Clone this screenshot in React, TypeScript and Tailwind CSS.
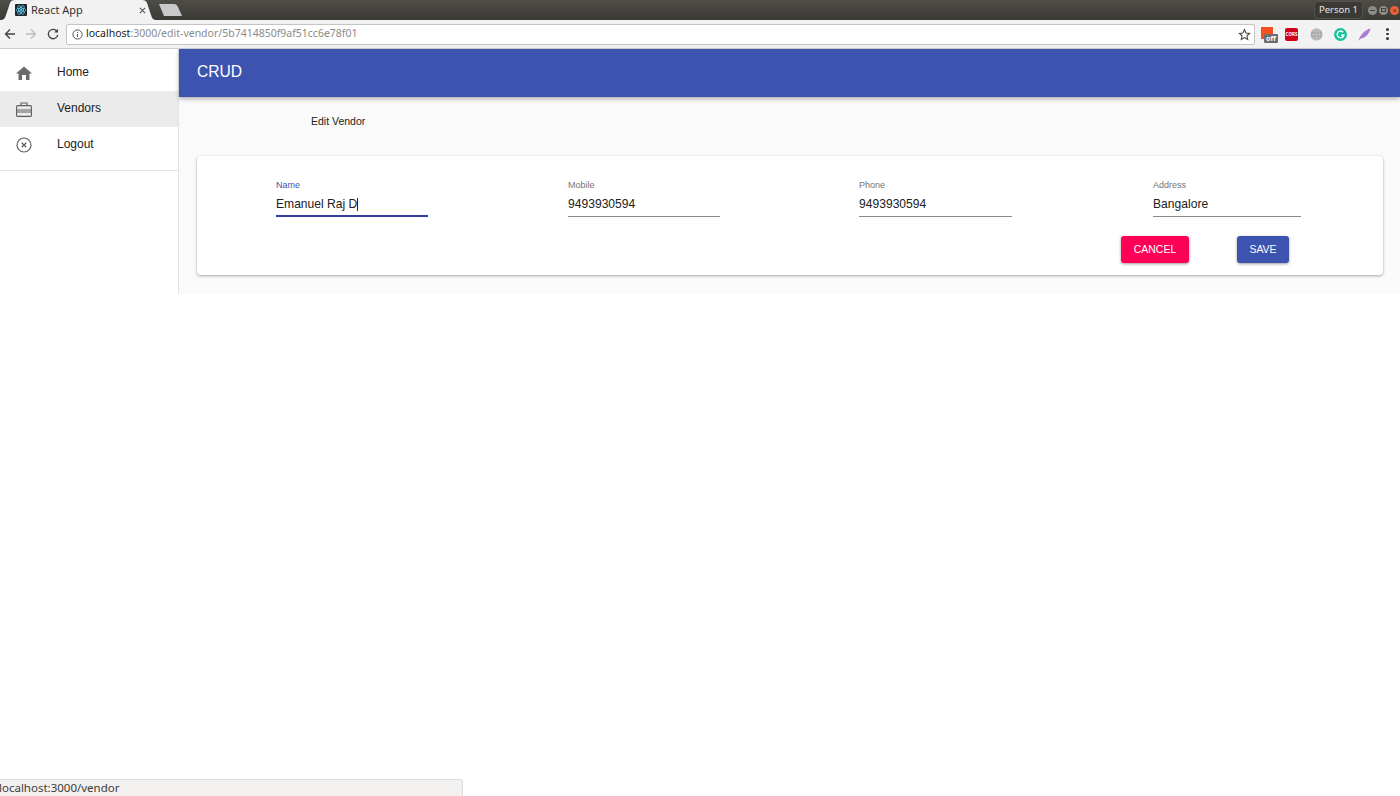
import React from "react";

const sans = "font-['Liberation_Sans',Arial,sans-serif]";
const ui = "font-['Noto_Sans','Open_Sans',sans-serif]";

function Field({ label, value, active, width, caret }: { label: string; value: string; active?: boolean; width: string; caret?: boolean }) {
  return (
    <div className={`${width} flex flex-col`}>
      <label className={`text-[9px] leading-[12px] h-[12px] ${active ? "text-[#3f51b5]" : "text-[#757575]"}`}>{label}</label>
      <div className="mt-[3px] h-[20px] text-[12.1px] leading-[20px] text-[#212121] flex items-center">
        <span>{value}</span>
        {caret && <span className="w-px h-[13px] bg-[#212121]" />}
      </div>
      <div className={active ? "mt-[1px] h-[2px] bg-[#303f9f]" : "mt-[2px] h-px bg-[#8a8a8a]"} />
    </div>
  );
}

function NavItem({ label, active, icon }: { label: string; active?: boolean; icon: React.ReactNode }) {
  return (
    <div className={`h-[36px] flex items-center ${active ? "bg-[#ebebeb]" : ""}`}>
      <div className="w-[57px] pl-[16px] flex items-center">{icon}</div>
      <span className="text-[12px] pb-[2px] text-[#212121]">{label}</span>
    </div>
  );
}

export default function App() {
  return (
    <div className={`relative w-[1400px] h-[796px] overflow-hidden bg-white ${sans}`}>
      {/* Title bar */}
      <div className="h-[20px] flex bg-gradient-to-b from-[#4f4d47] to-[#3b3a36]">
        <div className="relative w-[157px] h-[20px] flex items-center">
          <svg width="157" height="20" viewBox="0 0 157 20" className="absolute left-0 top-0">
            <path d="M0 20 C4 20 5 18 6 15 L10 3 C11 1 12 0 15 0 L142 0 C145 0 146 1 147 3 L151 15 C152 18 153 20 157 20 Z" fill="#f2f2f2" />
          </svg>
          <div className="relative ml-[15px] flex items-center w-full">
            <svg width="12" height="12" viewBox="0 0 12 12">
              <rect width="12" height="12" rx="1" fill="#20232a" />
              <g fill="none" stroke="#61dafb" strokeWidth="0.7">
                <ellipse cx="6" cy="6" rx="5" ry="2" />
                <ellipse cx="6" cy="6" rx="5" ry="2" transform="rotate(60 6 6)" />
                <ellipse cx="6" cy="6" rx="5" ry="2" transform="rotate(120 6 6)" />
              </g>
              <circle cx="6" cy="6" r="1" fill="#61dafb" />
            </svg>
            <span className={`ml-[4px] w-[108px] text-[11px] text-[#333] ${ui}`}>React App</span>
            <svg width="7" height="7" viewBox="0 0 8 8">
              <path d="M1 1 L7 7 M7 1 L1 7" stroke="#555" strokeWidth="1.2" />
            </svg>
          </div>
        </div>
        <svg width="26" height="14" viewBox="0 0 26 14" className="mt-[4px]">
          <path d="M2 0 L17 0 C19 0 20 1 21 3 L25 12 L7 12 Z" fill="#c9c9c9" />
        </svg>
        <div className="flex-1" />
        <div className={`mt-[1px] w-[49px] h-[18px] rounded-[3px] bg-[#3a3935] border border-[#55534e] flex items-center justify-center text-[9.5px] text-[#e4e4e4] ${ui}`}>Person 1</div>
        <div className="flex items-center gap-[2px] ml-[5px] mr-[1px]">
          <span className="w-[9px] h-[9px] rounded-full bg-[#8d8c87] flex items-center justify-center"><span className="w-[5px] h-px bg-[#444]" /></span>
          <span className="w-[9px] h-[9px] rounded-full bg-[#8d8c87] flex items-center justify-center"><span className="w-[5px] h-[4px] border border-[#444]" /></span>
          <span className="w-[9px] h-[9px] rounded-full bg-[#e9643a] flex items-center justify-center text-[7px] leading-none text-[#5a2010]">×</span>
        </div>
      </div>

      {/* Toolbar */}
      <div className="h-[29px] bg-[#f2f2f2] border-b border-[#d0d0d0] flex items-center">
        <svg width="12" height="12" viewBox="0 0 12 12" className="ml-[4px]">
          <path d="M11 6 H2 M6 1.5 L1.5 6 L6 10.5" fill="none" stroke="#444" strokeWidth="1.4" />
        </svg>
        <svg width="12" height="12" viewBox="0 0 12 12" className="ml-[9px]">
          <path d="M1 6 H10 M6 1.5 L10.5 6 L6 10.5" fill="none" stroke="#bdbdbd" strokeWidth="1.4" />
        </svg>
        <svg width="12" height="12" viewBox="0 0 12 12" className="ml-[10px]">
          <path d="M10.3 4 A4.7 4.7 0 1 0 10.7 6.8" fill="none" stroke="#444" strokeWidth="1.3" />
          <path d="M11 0.8 V4.6 H7.2 Z" fill="#444" />
        </svg>
        <div className={`ml-[7px] w-[1189px] h-[21px] bg-white border border-[#c4c4c4] rounded-[2px] flex items-center ${ui}`}>
          <svg width="11" height="11" viewBox="0 0 11 11" className="ml-[5px]">
            <circle cx="5.5" cy="5.5" r="4.6" fill="none" stroke="#555" strokeWidth="1" />
            <path d="M5.5 5 V8 M5.5 3 V4" stroke="#555" strokeWidth="1" />
          </svg>
          <span className="ml-[3px] text-[10.5px] text-[#222]">localhost<span className="text-[#8a8a8a]">:3000/edit-vendor/5b7414850f9af51cc6e78f01</span></span>
          <div className="flex-1" />
          <svg width="13" height="13" viewBox="0 0 24 24" className="mr-[3px]">
            <path d="M12 3 L14.8 9.2 L21.5 9.9 L16.5 14.4 L17.9 21 L12 17.6 L6.1 21 L7.5 14.4 L2.5 9.9 L9.2 9.2 Z" fill="none" stroke="#444" strokeWidth="2" />
          </svg>
        </div>
        <div className="relative ml-[6px] w-[18px] h-[18px]">
          <div className="w-[12px] h-[12px] mt-[2px] bg-[#f4511e]" />
          <span className={`absolute left-[3px] top-[9px] h-[9px] w-[14px] rounded-[1px] bg-[#6d6d6d] text-white text-[7px] leading-[9px] font-bold text-center ${ui}`}>off</span>
        </div>
        <div className={`ml-[6px] w-[13px] h-[13px] rounded-[2px] bg-[#d0021b] text-white text-[4.5px] leading-[13px] font-bold text-center ${ui}`}>CORS</div>
        <svg width="13" height="13" viewBox="0 0 13 13" className="ml-[12px]">
          <circle cx="6.5" cy="6.5" r="6" fill="#a8a8a8" />
          <path d="M0.5 6.5 H12.5 M6.5 0.5 V12.5 M2 3 H11 M2 10 H11" stroke="#cfcfcf" strokeWidth="0.6" />
          <ellipse cx="6.5" cy="6.5" rx="3" ry="6" fill="none" stroke="#cfcfcf" strokeWidth="0.6" />
        </svg>
        <svg width="13" height="13" viewBox="0 0 13 13" className="ml-[11px]">
          <circle cx="6.5" cy="6.5" r="6.5" fill="#15c39a" />
          <path d="M9.2 4.2 A3.4 3.4 0 1 0 9.9 7 H7" fill="none" stroke="#fff" strokeWidth="1.4" />
        </svg>
        <svg width="13" height="13" viewBox="0 0 13 13" className="ml-[11px]">
          <path d="M0.5 12.5 C2 8 6 2 12.5 0.5 C11.5 5 8 10 3 10.5 Z" fill="#a77bd6" />
        </svg>
        <div className="ml-[15px] flex flex-col gap-[2px]">
          <span className="w-[2.5px] h-[2.5px] rounded-full bg-[#333]" />
          <span className="w-[2.5px] h-[2.5px] rounded-full bg-[#333]" />
          <span className="w-[2.5px] h-[2.5px] rounded-full bg-[#333]" />
        </div>
      </div>

      {/* Page */}
      <div className="flex h-[245px]">
        <aside className="w-[179px] h-full border-r border-[#e3e3e3] bg-white">
          <div className="pt-[6px] pb-[8px] border-b border-[#e3e3e3] h-[122px]">
            <NavItem
              label="Home"
              icon={
                <svg width="16" height="14" viewBox="0 0 16 14"><path d="M8 0.5 L16 7.5 H13.5 V14 H10 V9 H6 V14 H2.5 V7.5 H0 Z" fill="#6b6b6b" /></svg>
              }
            />
            <NavItem
              label="Vendors"
              active
              icon={
                <svg width="16" height="15" viewBox="0 0 16 15" fill="none" stroke="#5f5f5f" strokeWidth="1.1">
                  <rect x="0.6" y="3.6" width="14.8" height="10.8" rx="1" />
                  <path d="M5 3.5 V1 H11 V3.5 M0.6 8 H15.4 M0.6 10 H15.4" />
                </svg>
              }
            />
            <NavItem
              label="Logout"
              icon={
                <svg width="16" height="16" viewBox="0 0 16 16" fill="none" stroke="#5f5f5f">
                  <circle cx="8" cy="8" r="7" strokeWidth="1.2" />
                  <path d="M5.7 5.7 L10.3 10.3 M10.3 5.7 L5.7 10.3" strokeWidth="1.3" />
                </svg>
              }
            />
          </div>
        </aside>
        <div className="flex-1 bg-[#fafafa]">
          <header className="h-[48px] bg-[#3d53b0] flex items-center pl-[18px] pb-[3px] text-[15.6px] text-white shadow-[0_2px_4px_rgba(0,0,0,0.3)]">CRUD</header>
          <div className="pl-[132px] pt-[17px] h-[59px] text-[10.5px] leading-[14px] text-[#212121]">Edit Vendor</div>
          <div className="ml-[18px] w-[1186px] h-[119px] rounded-[4px] bg-white shadow-[0_1px_3px_rgba(0,0,0,0.35)] pt-[23px]">
            <div className="flex pl-[79px]">
              <Field label="Name" value="Emanuel Raj D" active caret width="w-[152px]" />
              <div className="w-[140px]" />
              <Field label="Mobile" value="9493930594" width="w-[152px]" />
              <div className="w-[139px]" />
              <Field label="Phone" value="9493930594" width="w-[153px]" />
              <div className="w-[141px]" />
              <Field label="Address" value="Bangalore" width="w-[148px]" />
            </div>
            <div className="flex justify-end pr-[94px] mt-[19px] gap-[48px] text-[10.5px] text-white">
              <button className="w-[68px] h-[27px] rounded-[3px] bg-[#ff0057] shadow-[0_1px_3px_rgba(0,0,0,0.4)]">CANCEL</button>
              <button className="w-[52px] h-[27px] rounded-[3px] bg-[#3d53b0] shadow-[0_1px_3px_rgba(0,0,0,0.4)]">SAVE</button>
            </div>
          </div>
        </div>
      </div>

      {/* Status bubble */}
      <div className={`absolute left-0 bottom-0 w-[463px] h-[17px] bg-[#f2f1ef] border-t border-r border-[#dcdcdc] rounded-tr-[3px] text-[11.5px] leading-[16px] text-[#3c3c3c] ${ui} overflow-hidden`}>
        <span className="block -ml-[1px]">localhost:3000/vendor</span>
      </div>
    </div>
  );
}
